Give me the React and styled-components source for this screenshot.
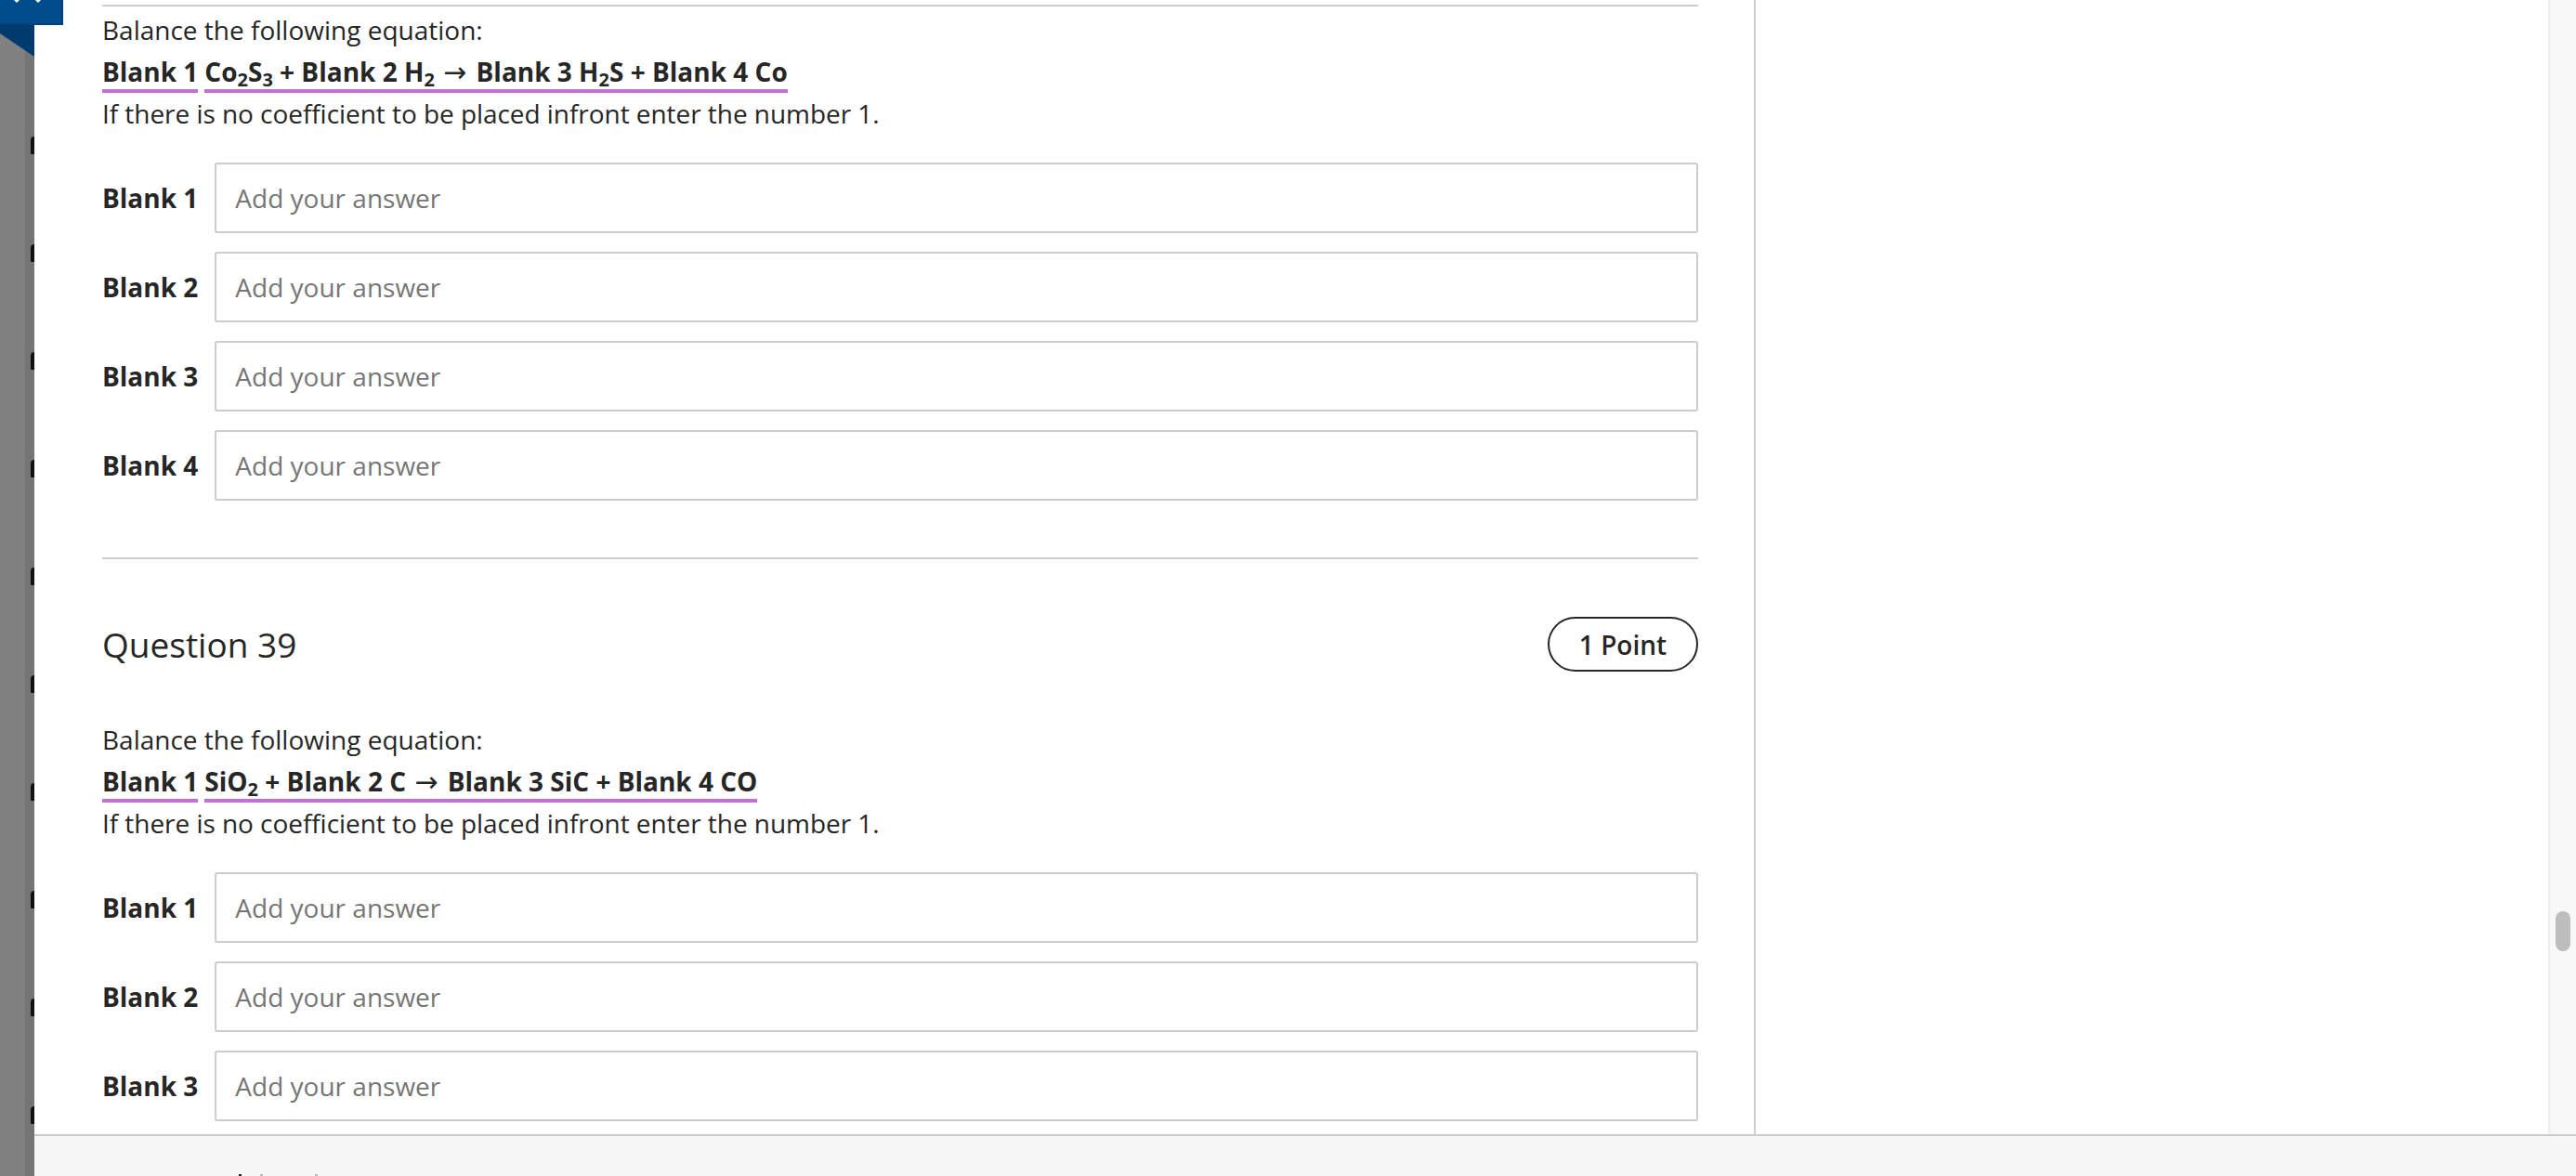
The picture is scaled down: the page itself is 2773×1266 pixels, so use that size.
import React from 'react';
import styled, { createGlobalStyle } from 'styled-components';

const Global = createGlobalStyle`
  html, body { margin: 0; padding: 0; height: 100%; overflow: hidden; background: #fff; }
  #root { height: 100%; }
`;

const Page = styled.div`
  position: relative;
  display: flex;
  width: 2773px;
  height: 1266px;
  overflow: hidden;
  background: #808080;
  font-family: "Open Sans", "Noto Sans", sans-serif;
  color: #262626;
`;
const Backdrop = styled.div`
  position: relative;
  flex: 0 0 37px;
  background: linear-gradient(to right, #808080 0, #808080 27px, #757575 27px, #757575 37px);
`;
const Ribbon = styled.svg`
  position: absolute;
  left: 0;
  top: 0;
  width: 68px;
  height: 27px;
  z-index: 2;
`;
const Fold = styled.svg`
  position: absolute;
  left: 0;
  top: 27px;
  width: 37px;
  height: 35px;
`;
const Tick = styled.div`
  position: absolute;
  left: 33px;
  width: 4px;
  height: 19px;
  border-radius: 4px 0 0 1px;
  background: #111;
`;
const Panel = styled.div`
  flex: 1;
  display: flex;
  flex-direction: column;
  background: #fff;
  min-width: 0;
`;
const Body = styled.div`
  flex: 0 0 1221px;
  display: flex;
  overflow: hidden;
`;
const Main = styled.main`
  flex: 0 0 1853px;
  box-sizing: border-box;
  padding: 5px 60px 0 73px;
  border-right: 2px solid #ccc;
`;
const Side = styled.aside`
  position: relative;
  flex: 1;
`;
const Rule = styled.hr`
  margin: 0;
  border: 0;
  height: 2px;
  background: #ccc;
`;
const Prompt = styled.div`
  padding-top: 3px;
  font-size: 28px;
  line-height: 45px;
`;
const Line = styled.div``;
const Note = styled.div`
  letter-spacing: -0.05px;
`;
const Equation = styled.div`
  font-weight: 700;
  white-space: nowrap;
`;
const Under = styled.span`
  border-bottom: 4px solid #c36fd6;
  & + & { margin-left: 7px; }
  sub { font-size: 20px; line-height: 0; vertical-align: -5px; }
`;
const Arrow = styled.span`
  margin: 0 3px 0 2px;
  font-family: "DejaVu Sans", sans-serif;
  font-size: 30px;
  font-weight: 400;
  line-height: 0;
`;
const Rows = styled.div`
  display: flex;
  flex-direction: column;
  gap: 20px;
  margin-top: 30px;
`;
const Row = styled.div`
  display: flex;
  align-items: center;
  gap: 18px;
`;
const RowLabel = styled.label`
  flex: 0 0 103px;
  font-size: 28px;
  font-weight: 700;
  white-space: nowrap;
`;
const Answer = styled.input`
  flex: 1;
  box-sizing: border-box;
  height: 76px;
  padding: 0 20px;
  border: 2px solid #ccc;
  border-radius: 3px;
  font: 400 28px "Open Sans", sans-serif;
  color: #262626;
  outline: none;
  &::placeholder { color: #767676; opacity: 1; }
`;
const QuestionHead = styled.div`
  display: flex;
  align-items: center;
  justify-content: space-between;
  margin-top: 62px;
  margin-bottom: 48px;
`;
const QuestionTitle = styled.h2`
  margin: 0;
  font-size: 37px;
  font-weight: 500;
`;
const Pill = styled.div`
  box-sizing: border-box;
  width: 162px;
  height: 59px;
  display: flex;
  align-items: center;
  justify-content: center;
  border: 2px solid #262626;
  border-radius: 30px;
  font-size: 28px;
  font-weight: 600;
`;
const Divider = styled(Rule)`
  margin-top: 61px;
`;
const Track = styled.div`
  position: absolute;
  right: 0;
  top: 0;
  bottom: 0;
  width: 28px;
  background: #f8f8f8;
  border-left: 2px solid #ececec;
`;
const Thumb = styled.div`
  position: absolute;
  left: 6px;
  top: 981px;
  width: 16px;
  height: 43px;
  border-radius: 8px;
  background: #bdbdbd;
`;
const Footer = styled.footer`
  position: relative;
  flex: 1;
  background: #f7f7f7;
  border-top: 2px solid #ccc;
`;
const Peek = styled.span`
  position: absolute;
  bottom: 0;
  width: 3px;
  height: 2px;
  background: ${(p) => p.$color};
`;

const ticks = [147, 263, 379, 495, 611, 727, 843, 959, 1075, 1191];
const peeks = [
  { x: 220, color: '#222' },
  { x: 243, color: '#bbb' },
  { x: 302, color: '#bbb' },
];

const Eq = ({ children }) => (
  <Equation>
    <Under>Blank 1</Under>
    <Under>{children}</Under>
  </Equation>
);

const Question = ({ eq, blanks }) => (
  <>
    <Prompt>
      <Line>Balance the following equation:</Line>
      <Eq>{eq}</Eq>
      <Note>If there is no coefficient to be placed infront enter the number 1.</Note>
    </Prompt>
    <Rows>
      {blanks.map((n) => (
        <Row key={n}>
          <RowLabel>Blank {n}</RowLabel>
          <Answer placeholder="Add your answer" />
        </Row>
      ))}
    </Rows>
  </>
);

export default function App() {
  return (
    <Page>
      <Global />
      <Ribbon viewBox="0 0 68 27">
        <rect width="68" height="27" fill="#00407a" />
        <rect width="66" height="25" fill="#004c8c" />
        <path d="M15 0h6l-3 3zM38 0h6l-3 3z" fill="#fff" />
      </Ribbon>
      <Backdrop>
        <Fold viewBox="0 0 37 35">
          <polygon points="0,0 37,0 37,34 0,9" fill="#003a6e" />
        </Fold>
        {ticks.map((t) => <Tick key={t} style={{ top: t }} />)}
      </Backdrop>
      <Panel>
        <Body>
          <Main>
            <Rule />
            <Question
              eq={<>Co<sub>2</sub>S<sub>3</sub> + Blank 2 H<sub>2</sub> <Arrow>→</Arrow> Blank 3 H<sub>2</sub>S + Blank 4 Co</>}
              blanks={[1, 2, 3, 4]}
            />
            <Divider />
            <QuestionHead>
              <QuestionTitle>Question 39</QuestionTitle>
              <Pill>1 Point</Pill>
            </QuestionHead>
            <Question
              eq={<>SiO<sub>2</sub> + Blank 2 C <Arrow>→</Arrow> Blank 3 SiC + Blank 4 CO</>}
              blanks={[1, 2, 3]}
            />
          </Main>
          <Side>
            <Track><Thumb /></Track>
          </Side>
        </Body>
        <Footer>
          {peeks.map((p) => <Peek key={p.x} $color={p.color} style={{ left: p.x }} />)}
        </Footer>
      </Panel>
    </Page>
  );
}
